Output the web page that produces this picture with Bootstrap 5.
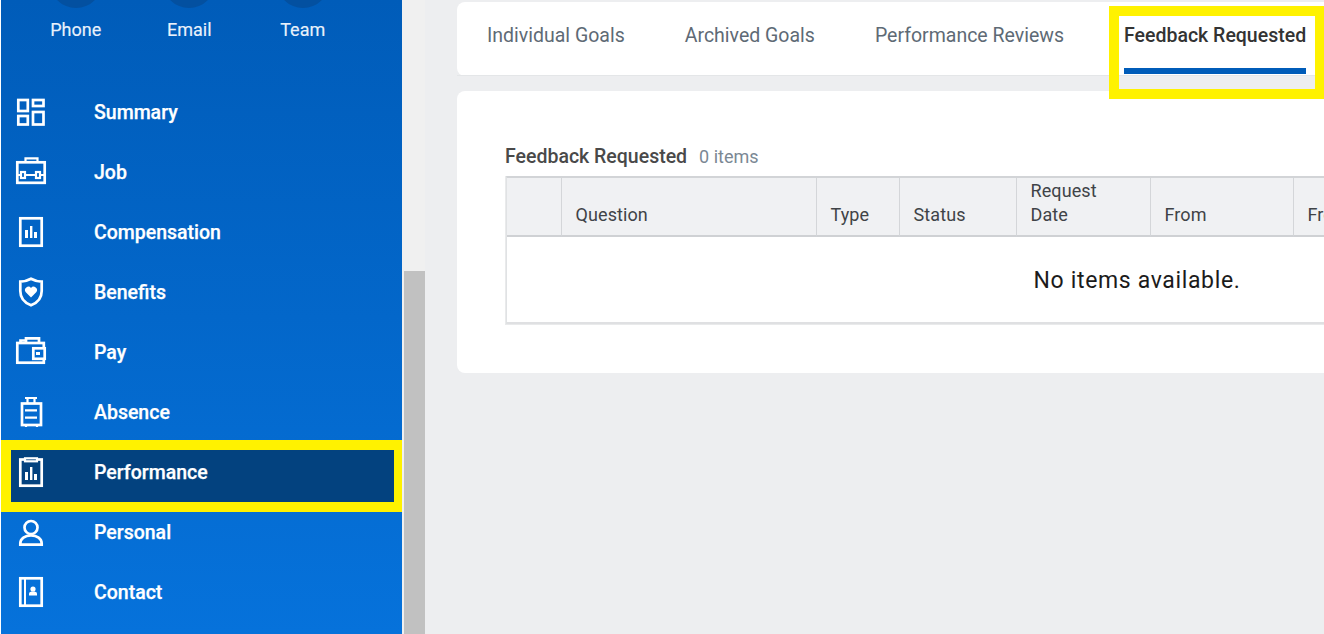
<!DOCTYPE html>
<html lang="en">
<head>
<meta charset="utf-8">
<title>Feedback Requested</title>
<link href="https://cdn.jsdelivr.net/npm/bootstrap@5.3.0/dist/css/bootstrap.min.css" rel="stylesheet">
<style>
html,body{height:634px;overflow:hidden;background:#fff;font-family:Roboto,"Liberation Sans",sans-serif}
.wd-shell{height:634px;padding-left:1px}
.wd-side{width:401px;flex:none;height:634px;overflow:hidden;background:linear-gradient(180deg,#005cb9 0,#0672db 634px);color:#fff}
.wd-actions{padding-left:18px}
.wd-action{width:113.5px;text-align:center;font-size:18px;line-height:24px;color:#e9f1fb;-webkit-text-stroke:.15px #e9f1fb}
.wd-disc{width:52px;height:52px;border-radius:50%;background:#0350a0;margin:-44px auto 10px}
.wd-menu{margin-top:40px}
.wd-menu .nav-link{position:relative;height:60px;padding:0 0 0 14px;display:flex;align-items:center;color:#fff;font-size:19.5px;font-weight:500;-webkit-text-stroke:.25px #fff}
.wd-menu .wd-label{padding-top:2px}
.wd-menu svg{width:32px;height:32px;flex:none;margin-right:47px;fill:none;stroke:#fff;stroke-width:2.7}
.wd-menu svg .wd-solid{fill:#fff;stroke:none}
.wd-menu .wd-current{background:#03427f}
.wd-mark{position:absolute;border:10px solid #fff200;pointer-events:none;z-index:2}
.wd-mark-side{top:-2px;left:0;right:-2px;bottom:-10px}
.wd-rail{width:23px;flex:none;background:#f0f0f0;padding:271px 0 0 2px}
.wd-thumb{width:21px;height:363px;background:#c1c1c1}
.wd-main{flex:1 1 0;min-width:0;height:634px;overflow:hidden;background:#edeef0;padding:2px 0 0 32px}
.wd-panel{width:1500px;background:#fff;border-radius:8px}
.wd-tabs{height:74px;padding-left:30px;gap:60px;flex-wrap:nowrap;border-bottom:1px solid #e4e6e8;box-sizing:border-box}
.wd-tabs .nav-link{position:relative;padding:0;color:#5e6a75;font-size:19.5px;line-height:68px;height:72px;white-space:nowrap}
.wd-tabs .nav-link.active{color:#333;font-weight:500;border-bottom:6px solid #005cb9;box-sizing:border-box}
.wd-mark-tab{top:4px;left:-15px;right:-19px;bottom:-31px}
.wd-body{margin-top:15px;padding:54px 0 48px 48px}
.wd-heading{display:flex;align-items:baseline;gap:12px;height:24px;line-height:24px;margin-bottom:8px}
.wd-heading h2{font-size:19.5px;font-weight:500;color:#494949;margin:0;line-height:24px}
.wd-heading span{font-size:18px;color:#7b8894}
.wd-frame{width:1264px;margin-top:-1px;border:1px solid #e9eaeb;border-top:0}
.wd-grid{width:1262px;table-layout:fixed;border-collapse:separate;border-spacing:0;margin:0;border:1px solid #e0e2e4;border-top:2px solid #d2d4d7;border-bottom:2px solid #dfe0e2}
.wd-grid th{background:#f0f1f3;height:49px;padding:0 30px 8px 13.5px;vertical-align:bottom;font-size:18px;font-weight:400;line-height:24px;color:#3f4347;border-right:1px solid #d4d6d9;border-bottom:2px solid #cfd1d4;letter-spacing:.1px;box-sizing:content-box}
.wd-grid td{height:85px;padding:3px 0 0;text-align:center;vertical-align:middle;font-size:23px;letter-spacing:.65px;color:#1b1b1b;border:0}
</style>
</head>
<body>
<div class="wd-shell d-flex">
  <aside class="wd-side">
    <div class="wd-actions d-flex">
      <div class="wd-action"><div class="wd-disc"></div>Phone</div>
      <div class="wd-action"><div class="wd-disc"></div>Email</div>
      <div class="wd-action"><div class="wd-disc"></div>Team</div>
    </div>
    <nav class="nav flex-column wd-menu">
      <a class="nav-link" href="#"><svg viewBox="0 0 32 32"><rect x="3.300" y="4" width="9.500" height="11"/><rect x="3.300" y="20" width="9.500" height="8.500"/><rect x="18" y="4" width="10.500" height="6"/><rect x="18" y="16" width="10.500" height="12.500"/></svg><span class="wd-label">Summary</span></a>
      <a class="nav-link" href="#"><svg viewBox="0 0 32 32"><rect x="2.300" y="6.300" width="27.400" height="20.500"/><path d="M10.500 6V2.300H22.500V6M2 19H6M10 19H21M25 19H30" stroke-width="2.200"/><rect x="6" y="16" width="4" height="6" stroke-width="2.200"/><rect x="21" y="16" width="4" height="6" stroke-width="2.200"/></svg><span class="wd-label">Job</span></a>
      <a class="nav-link" href="#"><svg viewBox="0 0 32 32"><rect x="5.300" y="2.300" width="21.400" height="27.400"/><rect class="wd-solid" x="10" y="14" width="3" height="8"/><rect class="wd-solid" x="15" y="10" width="2.400" height="12"/><rect class="wd-solid" x="19" y="16" width="3" height="6"/></svg><span class="wd-label">Compensation</span></a>
      <a class="nav-link" href="#"><svg viewBox="0 0 32 32"><path d="M16 2.800C12.500 4.700 8.500 5.700 5.300 5.700V15C5.300 22 10 27 16 29.300C22 27 26.700 22 26.700 15V5.700C23.500 5.700 19.500 4.700 16 2.800Z"/><path class="wd-solid" d="M16 21.500L10.800 16.200A3.300 3.300 0 0 1 16 12A3.300 3.300 0 0 1 21.200 16.200Z"/></svg><span class="wd-label">Benefits</span></a>
      <a class="nav-link" href="#"><svg viewBox="0 0 32 32"><rect x="2.300" y="7" width="26.500" height="19.700"/><path d="M5.500 7V4.500H11M11 7V2.300H24V7"/><rect x="18.300" y="12.300" width="11.400" height="10.500" fill="#046ad0"/><rect class="wd-solid" x="21" y="16" width="4" height="3"/></svg><span class="wd-label">Pay</span></a>
      <a class="nav-link" href="#"><svg viewBox="0 0 32 32"><rect x="7" y="7.500" width="19" height="21.500"/><path d="M10 2H22M12.500 2V7M19.500 2V7M10 14.300H22M10 21.700H22M11 29V31M22 29V31" stroke-width="2.200"/></svg><span class="wd-label">Absence</span></a>
      <a class="nav-link wd-current" href="#"><svg viewBox="0 0 32 32"><rect x="5.300" y="3.500" width="21.400" height="26.200"/><rect x="10" y="2.300" width="12" height="3" fill="#03427f" stroke-width="2.200"/><rect class="wd-solid" x="10" y="16" width="3" height="8"/><rect class="wd-solid" x="15" y="11" width="2.400" height="13"/><rect class="wd-solid" x="19" y="18" width="3" height="6"/></svg><span class="wd-label">Performance</span><span class="wd-mark wd-mark-side"></span></a>
      <a class="nav-link" href="#"><svg viewBox="0 0 32 32"><circle cx="16" cy="11.500" r="6.500"/><path d="M5.300 28.700H26.700V27.500C26.700 22.500 22 19.500 16 19.500C10 19.500 5.300 22.500 5.300 27.500Z"/></svg><span class="wd-label">Personal</span></a>
      <a class="nav-link" href="#"><svg viewBox="0 0 32 32"><rect x="5.300" y="2.300" width="21.400" height="27.400"/><path d="M10 2V30" stroke-width="2"/><circle class="wd-solid" cx="18" cy="13" r="2.600"/><path class="wd-solid" d="M14 19.500V17.500C14 16 16 15.500 18 15.500C20 15.500 22 16 22 17.500V19.500Z"/></svg><span class="wd-label">Contact</span></a>
    </nav>
  </aside>
  <div class="wd-rail"><div class="wd-thumb"></div></div>
  <main class="wd-main">
    <div class="wd-panel">
      <nav class="nav wd-tabs">
        <a class="nav-link" href="#">Individual Goals</a>
        <a class="nav-link" href="#">Archived Goals</a>
        <a class="nav-link" href="#">Performance Reviews</a>
        <a class="nav-link active" href="#">Feedback Requested<span class="wd-mark wd-mark-tab"></span></a>
      </nav>
    </div>
    <div class="wd-panel wd-body">
      <div class="wd-heading"><h2>Feedback Requested</h2><span>0 items</span></div>
      <div class="wd-frame">
        <table class="wd-grid">
          <colgroup><col style="width:55px"><col style="width:255px"><col style="width:83px"><col style="width:117px"><col style="width:134px"><col style="width:143px"><col></colgroup>
          <thead><tr><th></th><th>Question</th><th>Type</th><th>Status</th><th>Request Date</th><th>From</th><th>From Role</th></tr></thead>
          <tbody><tr><td colspan="7">No items available.</td></tr></tbody>
        </table>
      </div>
    </div>
  </main>
</div>
<script src="https://cdn.jsdelivr.net/npm/bootstrap@5.3.0/dist/js/bootstrap.bundle.min.js"></script>
</body>
</html>
